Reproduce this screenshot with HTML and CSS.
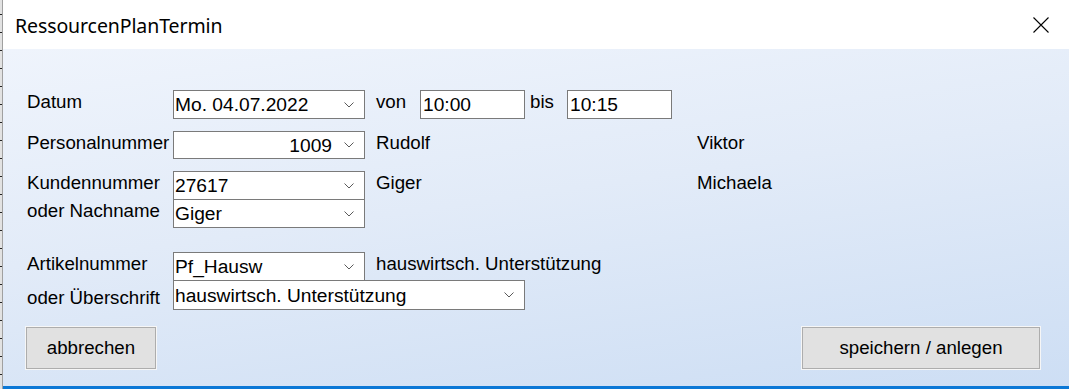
FILE: index.html
```html
<!DOCTYPE html>
<html lang="de">

<head>
    <meta charset="UTF-8">
    <title>RessourcenPlanTermin</title>
    <link rel="stylesheet" href="styles.css">
</head>

<body>
    <div class="screen">
        <!-- Rand vom Fenster dahinter -->
        <div class="ruler"></div>

        <div class="dialog">
            <header class="titlebar">
                <span class="title">RessourcenPlanTermin</span>
                <span class="close">
                    <svg width="16" height="16" viewBox="0 0 16 16">
                        <path d="M0.5 0.5 L15.5 15.5 M15.5 0.5 L0.5 15.5" stroke="#000" stroke-width="1.1" fill="none" />
                    </svg>
                </span>
            </header>

            <main class="client">
                <div class="form">
                    <!-- Datum / Zeit -->
                    <div class="row">
                        <div class="label">Datum</div>
                        <div class="combo">
                            <span class="value">Mo. 04.07.2022</span>
                            <svg class="chev" width="10" height="6" viewBox="0 0 10 6"><path d="M0.5 0.5 L5 5 L9.5 0.5" /></svg>
                        </div>
                        <span class="info von">von</span>
                        <div class="textbox">10:00</div>
                        <span class="info bis">bis</span>
                        <div class="textbox">10:15</div>
                    </div>

                    <!-- Personal -->
                    <div class="row">
                        <div class="label">Personalnummer</div>
                        <div class="combo short">
                            <span class="value num">1009</span>
                            <svg class="chev" width="10" height="6" viewBox="0 0 10 6"><path d="M0.5 0.5 L5 5 L9.5 0.5" /></svg>
                        </div>
                        <span class="info name">Rudolf</span>
                        <span class="info">Viktor</span>
                    </div>

                    <!-- Kunde -->
                    <div class="row">
                        <div class="label-stack">
                            <div class="label">Kundennummer</div>
                            <div class="label">oder Nachname</div>
                        </div>
                        <div class="combo-stack">
                            <div class="combo">
                                <span class="value">27617</span>
                                <svg class="chev" width="10" height="6" viewBox="0 0 10 6"><path d="M0.5 0.5 L5 5 L9.5 0.5" /></svg>
                            </div>
                            <div class="combo">
                                <span class="value">Giger</span>
                                <svg class="chev" width="10" height="6" viewBox="0 0 10 6"><path d="M0.5 0.5 L5 5 L9.5 0.5" /></svg>
                            </div>
                        </div>
                        <span class="info name">Giger</span>
                        <span class="info">Michaela</span>
                    </div>

                    <!-- Artikel -->
                    <div class="row article">
                        <div class="label">Artikelnummer</div>
                        <div class="combo">
                            <span class="value">Pf_Hausw</span>
                            <svg class="chev" width="10" height="6" viewBox="0 0 10 6"><path d="M0.5 0.5 L5 5 L9.5 0.5" /></svg>
                        </div>
                        <span class="info">hauswirtsch. Unterstützung</span>

                        <div class="label second">oder Überschrift</div>
                        <div class="combo wide second">
                            <span class="value">hauswirtsch. Unterstützung</span>
                            <svg class="chev" width="10" height="6" viewBox="0 0 10 6"><path d="M0.5 0.5 L5 5 L9.5 0.5" /></svg>
                        </div>
                    </div>
                </div>

                <div class="actions">
                    <button class="btn cancel">abbrechen</button>
                    <button class="btn save">speichern / anlegen</button>
                </div>
            </main>
        </div>
    </div>
</body>

</html>
```

FILE: styles.css
```css
html,
body {
    margin: 0;
    padding: 0;
}

body {
    font-family: "Liberation Sans", Arial, sans-serif;
    color: #000;
    background: #fff;
}

.screen {
    display: flex;
    width: 1069px;
    height: 389px;
    overflow: hidden;
}

/* schmaler Streifen links mit Strichen */
.ruler {
    width: 2px;
    flex: none;
    background-color: #e2e2e2;
    background-image: repeating-linear-gradient(to bottom,
            transparent 0, transparent 14px,
            #222 14px, #222 15.5px,
            transparent 15.5px, transparent 18px);
}

.dialog {
    flex: 1;
    display: flex;
    flex-direction: column;
    border-left: 1px solid #a0a0a0;
}

.titlebar {
    height: 49px;
    flex: none;
    display: flex;
    align-items: center;
    justify-content: space-between;
    background: #fff;
}

.title {
    font-family: "Noto Sans", "Open Sans", sans-serif;
    font-size: 19.5px;
    padding-left: 12px;
    padding-top: 1px;
    letter-spacing: -0.1px;
}

.close {
    display: flex;
    margin-right: 20px;
    margin-top: 1px;
}

.client {
    flex: 1;
    display: flex;
    flex-direction: column;
    background: linear-gradient(172deg, #eff4fc 0%, #e2ebf8 45%, #cddef4 100%);
    border-bottom: 3px solid #0c78d6;
}

.form {
    display: flex;
    flex-direction: column;
    gap: 12px;
    padding: 41px 0 0 24px;
}

.row {
    display: flex;
    align-items: flex-start;
}

.label {
    width: 146px;
    font-size: 18.7px;
    line-height: 28px;
    margin-top: -2px;
    white-space: nowrap;
}

.label-stack .label {
    height: 28px;
}

.label-stack .label + .label {
    margin-top: 0;
}

.combo {
    width: 192px;
    height: 29px;
    box-sizing: border-box;
    display: flex;
    align-items: center;
    border: 1px solid #7a7a7a;
    background: #fff;
    padding: 0 10px 0 1px;
    font-size: 19.2px;
    line-height: 27px;
}

.combo.short {
    height: 28px;
}

.combo-stack .combo + .combo {
    margin-top: -1px;
}

.value {
    flex: 1;
    white-space: nowrap;
}

.value.num {
    text-align: right;
    padding-right: 12px;
}

.chev {
    flex: none;
}

.chev path {
    fill: none;
    stroke: #5a5a5a;
    stroke-width: 1;
}

.textbox {
    width: 105px;
    height: 29px;
    box-sizing: border-box;
    border: 1px solid #7a7a7a;
    background: #fff;
    padding-left: 2px;
    font-size: 19.2px;
    line-height: 27px;
}

.info {
    font-size: 18.7px;
    line-height: 28px;
    margin-top: -2px;
    margin-left: 11px;
    white-space: nowrap;
}

.info.von {
    width: 44px;
}

.info.bis {
    margin-left: 5px;
    width: 37px;
}

.info.name {
    width: 310px;
}

.article {
    display: grid;
    grid-template-columns: 146px 192px auto;
    justify-content: start;
    margin-top: 12px;
}

.article .label.second {
    margin-top: 3px;
}

.combo.wide {
    width: 352px;
    height: 30px;
    grid-column: 2 / 4;
    margin-top: -1px;
}

.actions {
    display: flex;
    justify-content: space-between;
    padding: 0 29px 0 23px;
    margin-top: 15px;
}

.btn {
    height: 42px;
    box-sizing: border-box;
    border: 1px solid #adadad;
    box-shadow: 0 0 0 1px #f6f6f6;
    background: #e1e1e1;
    font-family: "Liberation Sans", Arial, sans-serif;
    font-size: 18.7px;
    color: #000;
    padding: 0;
}

.btn.cancel {
    width: 130px;
}

.btn.save {
    width: 238px;
}
```
